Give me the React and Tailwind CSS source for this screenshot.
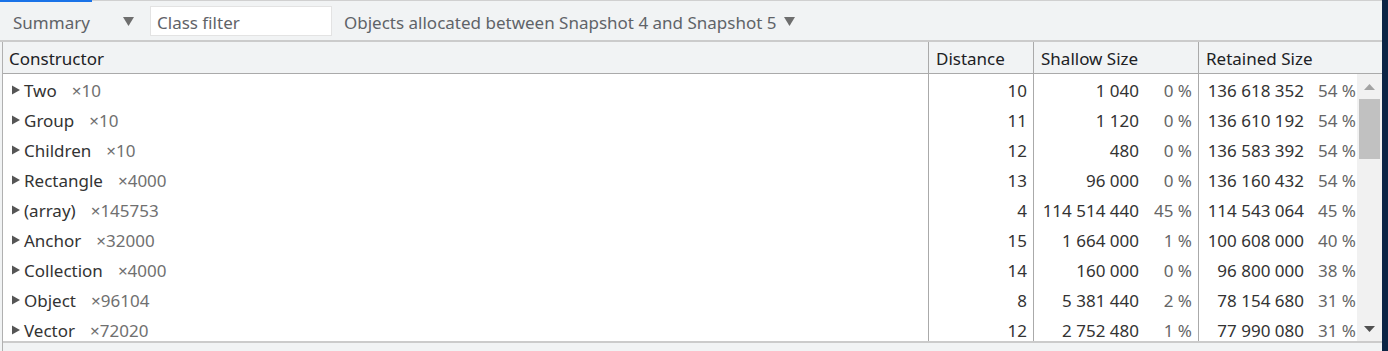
import React from "react";

const rows = [
  ["Two", "×10", "10", "1 040", "0 %", "136 618 352", "54 %"],
  ["Group", "×10", "11", "1 120", "0 %", "136 610 192", "54 %"],
  ["Children", "×10", "12", "480", "0 %", "136 583 392", "54 %"],
  ["Rectangle", "×4000", "13", "96 000", "0 %", "136 160 432", "54 %"],
  ["(array)", "×145753", "4", "114 514 440", "45 %", "114 543 064", "45 %"],
  ["Anchor", "×32000", "15", "1 664 000", "1 %", "100 608 000", "40 %"],
  ["Collection", "×4000", "14", "160 000", "0 %", "96 800 000", "38 %"],
  ["Object", "×96104", "8", "5 381 440", "2 %", "78 154 680", "31 %"],
  ["Vector", "×72020", "12", "2 752 480", "1 %", "77 990 080", "31 %"],
];

function Tri({ className }) {
  return (
    <svg width="8" height="10" viewBox="0 0 8 10" className={className}>
      <path d="M0 0.5 L8 5 L0 9.5 Z" fill="currentColor" />
    </svg>
  );
}

function Down({ className }) {
  return (
    <svg width="11" height="9" viewBox="0 0 11 9" className={className}>
      <path d="M0 0 L11 0 L5.5 9 Z" fill="currentColor" />
    </svg>
  );
}

export default function App() {
  return (
    <div
      className="w-[1388px] h-[351px] flex overflow-hidden bg-[#f1f3f4] text-[17px] leading-none"
      style={{ fontFamily: '"Noto Sans", "Open Sans", sans-serif' }}
    >
      <div className="flex-1 flex flex-col min-w-0">
        {/* top tab indicator */}
        <div className="h-[2px] flex">
          <div className="w-[92px] bg-[#1a73e8]" />
          <div className="flex-1 border-t border-[#d0d0d0]" />
        </div>
        {/* toolbar */}
        <div className="h-[40px] flex items-center border-b-2 border-[#cbcbcb] text-[#5f6368] pt-[2px]">
          <span className="ml-[13px] w-[110px]">Summary</span>
          <Down className="text-[#6e6e6e] -mt-[2px]" />
          <div className="ml-[16px] w-[182px] h-[30px] -mt-[2px] bg-white border border-[#e3e3e3] flex items-center pl-[6px] pt-[2px] text-[#5f6368]">
            Class filter
          </div>
          <span className="ml-[12px]">Objects allocated between Snapshot 4 and Snapshot 5</span>
          <Down className="ml-[7px] text-[#6e6e6e] -mt-[2px]" />
        </div>
        {/* table */}
        <div className="flex-1 flex flex-col ml-[2px] border-l border-[#b0b0b0] min-h-0">
          <div className="h-[32px] flex items-center border-b border-[#aaaaaa] text-[#202124] bg-[#f1f3f4] shrink-0">
            <div className="w-[925px] h-full flex items-center pl-[6px] pt-[2px]">Constructor</div>
            <div className="w-[105px] h-full flex items-center border-l border-[#aaaaaa] pl-[7px] pt-[2px]">Distance</div>
            <div className="w-[165px] h-full flex items-center border-l border-[#aaaaaa] pl-[7px] pt-[2px]">Shallow Size</div>
            <div className="flex-1 h-full flex items-center border-l border-[#aaaaaa] pl-[7px] pt-[2px]">Retained Size</div>
          </div>
          <div className="flex-1 flex bg-white min-h-0 border-b-2 border-[#cbcbcb]">
            <div className="flex-1 overflow-hidden">
              {rows.map((r) => (
                <div key={r[0]} className="h-[30px] flex items-center text-[#333333]">
                  <div className="w-[925px] h-full flex items-center pl-[9px]">
                    <Tri className="text-[#555555] mr-[4px] mt-[1px]" />
                    <span className="pt-[2px]">{r[0]}</span>
                    <span className="ml-[15px] pt-[2px] text-[#707070]">{r[1]}</span>
                  </div>
                  <div className="w-[105px] h-full flex items-center justify-end border-l border-[#aaaaaa] pr-[6px] pt-[2px]">
                    {r[2]}
                  </div>
                  <div className="w-[165px] h-full flex items-center justify-end border-l border-[#aaaaaa] pr-[6px] pt-[2px]">
                    <span>{r[3]}</span>
                    <span className="w-[53px] text-right text-[#666666]">{r[4]}</span>
                  </div>
                  <div className="flex-1 h-full flex items-center justify-end border-l border-[#aaaaaa] pr-[1px] pt-[2px]">
                    <span>{r[5]}</span>
                    <span className="w-[52px] text-right text-[#666666]">{r[6]}</span>
                  </div>
                </div>
              ))}
            </div>
            {/* scrollbar */}
            <div className="w-[25px] bg-[#f1f1f1] flex flex-col items-center">
              <div className="h-[25px] flex items-center justify-center">
                <svg width="11" height="6" viewBox="0 0 11 6">
                  <path d="M0 6 L5.5 0 L11 6 Z" fill="#a3a3a3" />
                </svg>
              </div>
              <div className="w-[21px] h-[60px] bg-[#c1c1c1]" />
              <div className="flex-1" />
              <div className="h-[25px] flex items-center justify-center">
                <svg width="11" height="6" viewBox="0 0 11 6">
                  <path d="M0 0 L11 0 L5.5 6 Z" fill="#505050" />
                </svg>
              </div>
            </div>
          </div>
          <div className="h-[8px] bg-[#f1f3f4]" />
        </div>
      </div>
      <div className="w-[6px] bg-[#0c2445]" />
    </div>
  );
}
